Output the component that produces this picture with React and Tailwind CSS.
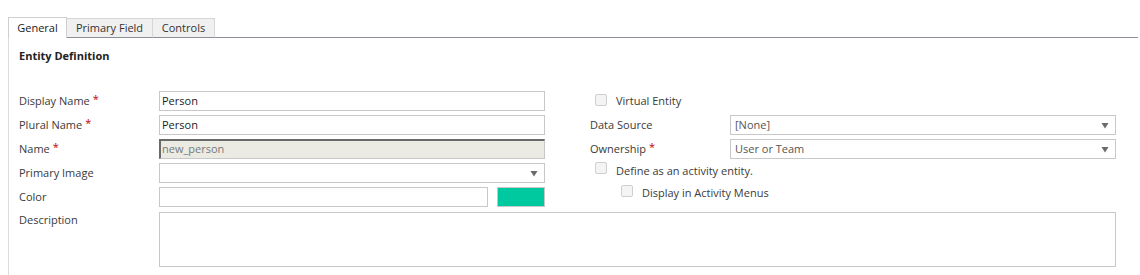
import React from "react";

const font = { fontFamily: '"Open Sans", "Liberation Sans", sans-serif' };

function Label({ text, required }) {
  return (
    <span className="text-[11px] leading-[16px] text-[#3a3a3a]">
      {text}
      {required && <span className="ml-[3px] relative -top-[2px] text-[#c00000]">*</span>}
    </span>
  );
}

function Arrow() {
  return (
    <svg width="8" height="7" viewBox="0 0 8 7" className="shrink-0">
      <path d="M0.5 1 H7.5 L4 6.5 Z" fill="#6a6a6a" />
    </svg>
  );
}

function Checkbox({ className = "" }) {
  return (
    <span
      className={`inline-block w-[12px] h-[12px] rounded-[2px] border border-[#cfcfcf] bg-[#f4f4f4] shrink-0 ${className}`}
    />
  );
}

function Row({ children }) {
  return <div className="h-[24px] flex items-start">{children}</div>;
}

export default function App() {
  return (
    <div className="w-[1140px] h-[275px] bg-white pt-[17px] pl-[8px] overflow-hidden" style={font}>
      {/* TABS */}
      <div className="flex items-end h-[21px] pr-[2px]">
        <div className="h-[21px] w-[59px] border-l border-t border-r border-[#cfcfcf] bg-white text-[11px] text-[#222] flex items-center justify-center">
          General
        </div>
        <div className="h-[20px] w-[86px] border-t border-r border-b border-t-[#d6d6d6] border-r-[#d6d6d6] border-b-[#8e8e98] bg-[#f0f0f0] text-[11px] text-[#333] flex items-center justify-center">
          Primary Field
        </div>
        <div className="h-[20px] w-[62px] border-t border-r border-b border-t-[#d6d6d6] border-r-[#d6d6d6] border-b-[#8e8e98] bg-[#f0f0f0] text-[11px] text-[#333] flex items-center justify-center">
          Controls
        </div>
        <div className="flex-1 border-b border-[#8e8e98]" />
      </div>

      {/* PANEL */}
      <div className="border-l border-[#dcdcdc] h-[240px] pl-[10px]">
        <div className="pt-[10px] text-[11px] leading-[16px] font-bold text-[#222]">Entity Definition</div>

        <div className="mt-[27px] flex gap-[45px]">
          {/* LEFT */}
          <div className="w-[526px] flex flex-col">
            <Row>
              <div className="w-[140px] h-[20px] flex items-center"><Label text="Display Name" required /></div>
              <div className="flex-1 h-[20px] border border-[#c8c8c8] px-[2px] flex items-center text-[11px] text-[#222]">Person</div>
            </Row>
            <Row>
              <div className="w-[140px] h-[20px] flex items-center"><Label text="Plural Name" required /></div>
              <div className="flex-1 h-[20px] border border-[#c8c8c8] px-[2px] flex items-center text-[11px] text-[#222]">Person</div>
            </Row>
            <Row>
              <div className="w-[140px] h-[20px] flex items-center"><Label text="Name" required /></div>
              <div className="flex-1 h-[20px] border-t-2 border-l-2 border-r border-b border-t-[#6a6a6a] border-l-[#6a6a6a] border-r-[#c8c8c8] border-b-[#c8c8c8] bg-[#ebebe4] px-[1px] flex items-center text-[11px] text-[#7a7a7a]">new_person</div>
            </Row>
            <Row>
              <div className="w-[140px] h-[20px] flex items-center"><Label text="Primary Image" /></div>
              <div className="flex-1 h-[20px] border border-[#c8c8c8] pr-[6px] flex items-center justify-end"><Arrow /></div>
            </Row>
            <Row>
              <div className="w-[140px] h-[20px] flex items-center"><Label text="Color" /></div>
              <div className="flex-1 flex gap-[9px]">
                <div className="flex-1 h-[20px] border border-[#c8c8c8]" />
                <div className="w-[48px] h-[20px] border border-[#c8c8c8] bg-[#00c9a0]" />
              </div>
            </Row>
          </div>

          {/* RIGHT */}
          <div className="w-[526px] flex flex-col">
            <Row>
              <div className="flex items-start gap-[9px] pl-[5px]">
                <Checkbox className="mt-[3px]" />
                <span className="mt-[2px] text-[11px] leading-[16px] text-[#3a3a3a]">Virtual Entity</span>
              </div>
            </Row>
            <Row>
              <div className="w-[140px] h-[20px] flex items-center"><Label text="Data Source" /></div>
              <div className="flex-1 h-[20px] border border-[#c8c8c8] pl-[4px] pr-[6px] flex items-center justify-between text-[11px] text-[#555]">
                [None]<Arrow />
              </div>
            </Row>
            <Row>
              <div className="w-[140px] h-[20px] flex items-center"><Label text="Ownership" required /></div>
              <div className="flex-1 h-[20px] border border-[#c8c8c8] pl-[4px] pr-[6px] flex items-center justify-between text-[11px] text-[#555]">
                User or Team<Arrow />
              </div>
            </Row>
            <Row>
              <div className="flex items-start gap-[9px] pl-[5px]">
                <Checkbox className="-mt-[1px]" />
                <span className="text-[11px] leading-[16px] text-[#3a3a3a]">Define as an activity entity.</span>
              </div>
            </Row>
            <Row>
              <div className="flex items-start gap-[9px] pl-[31px]">
                <Checkbox className="-mt-[2px]" />
                <span className="-mt-[2px] text-[11px] leading-[16px] text-[#3a3a3a]">Display in Activity Menus</span>
              </div>
            </Row>
          </div>
        </div>

        {/* DESCRIPTION */}
        <div className="mt-[1px] flex items-start">
          <div className="w-[140px] text-[11px] leading-[16px]"><Label text="Description" /></div>
          <div className="w-[957px] h-[55px] border border-[#c8c8c8]" />
        </div>
      </div>
    </div>
  );
}
